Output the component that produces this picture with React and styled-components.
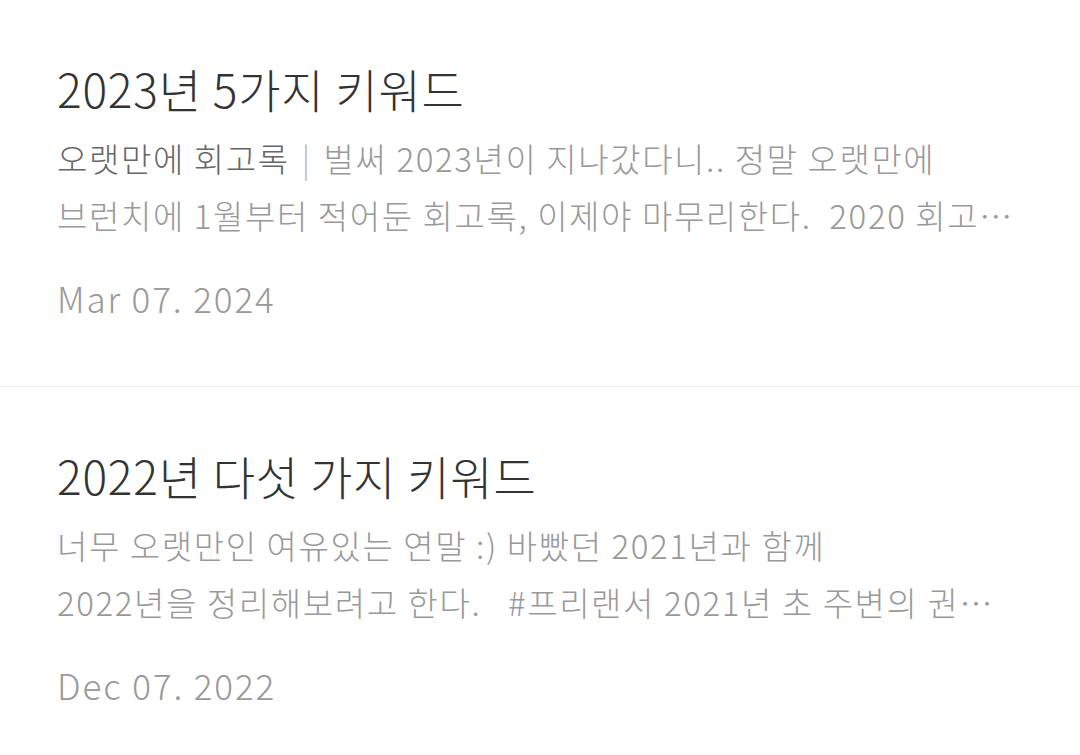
import React from 'react'
import styled, { createGlobalStyle } from 'styled-components'

const GlobalStyle = createGlobalStyle`
  body {
    margin: 0;
    background: #fff;
    font-family: "Noto Sans CJK KR", "Noto Sans", sans-serif;
    font-weight: 300;
  }
`

const List = styled.ul`
  list-style: none;
  margin: 0;
  padding: 0;
`
const Item = styled.li`
  padding: 58px 57px 68px;
  border-bottom: 1px solid #ebebeb;
`
const Title = styled.h2`
  margin: 0 0 12px;
  font-size: 46px;
  font-weight: 300;
  line-height: 60px;
  color: #333;
  letter-spacing: 0.8px;
`
const Summary = styled.div`
  font-size: 33px;
  line-height: 57px;
  color: #999;
  letter-spacing: 1.6px;
`
const Line = styled.p`
  margin: 0;
  white-space: pre;
  overflow: hidden;
  text-overflow: ellipsis;
`
const Lead = styled.span`
  color: #666;
`
const Bar = styled.span`
  margin: 0 12px;
  color: #bbb;
`
const Date = styled.div`
  margin-top: 34px;
  font-size: 35px;
  line-height: 40px;
  color: #999;
  letter-spacing: 1.9px;
`

const posts = [
  {
    title: '2023년 5가지 키워드',
    lead: '오랫만에 회고록',
    lines: [
      '벌써 2023년이 지나갔다니.. 정말 오랫만에',
      '브런치에 1월부터 적어둔 회고록, 이제야 마무리한다.  2020 회고록 이후로 처음이다',
    ],
    date: 'Mar 07. 2024',
  },
  {
    title: '2022년 다섯 가지 키워드',
    lines: [
      '너무 오랫만인 여유있는 연말 :) 바빴던 2021년과 함께',
      '2022년을 정리해보려고 한다.   #프리랜서 2021년 초 주변의 권유로 프리랜서를 시작했다',
    ],
    date: 'Dec 07. 2022',
  },
]

export default function App() {
  return (
    <>
      <GlobalStyle />
      <List>
        {posts.map(post => (
          <Item key={post.title}>
            <Title>{post.title}</Title>
            <Summary>
              <Line>
                {post.lead && (
                  <>
                    <Lead>{post.lead}</Lead>
                    <Bar>|</Bar>
                  </>
                )}
                {post.lines[0]}
              </Line>
              <Line>{post.lines[1]}</Line>
            </Summary>
            <Date>{post.date}</Date>
          </Item>
        ))}
      </List>
    </>
  )
}
